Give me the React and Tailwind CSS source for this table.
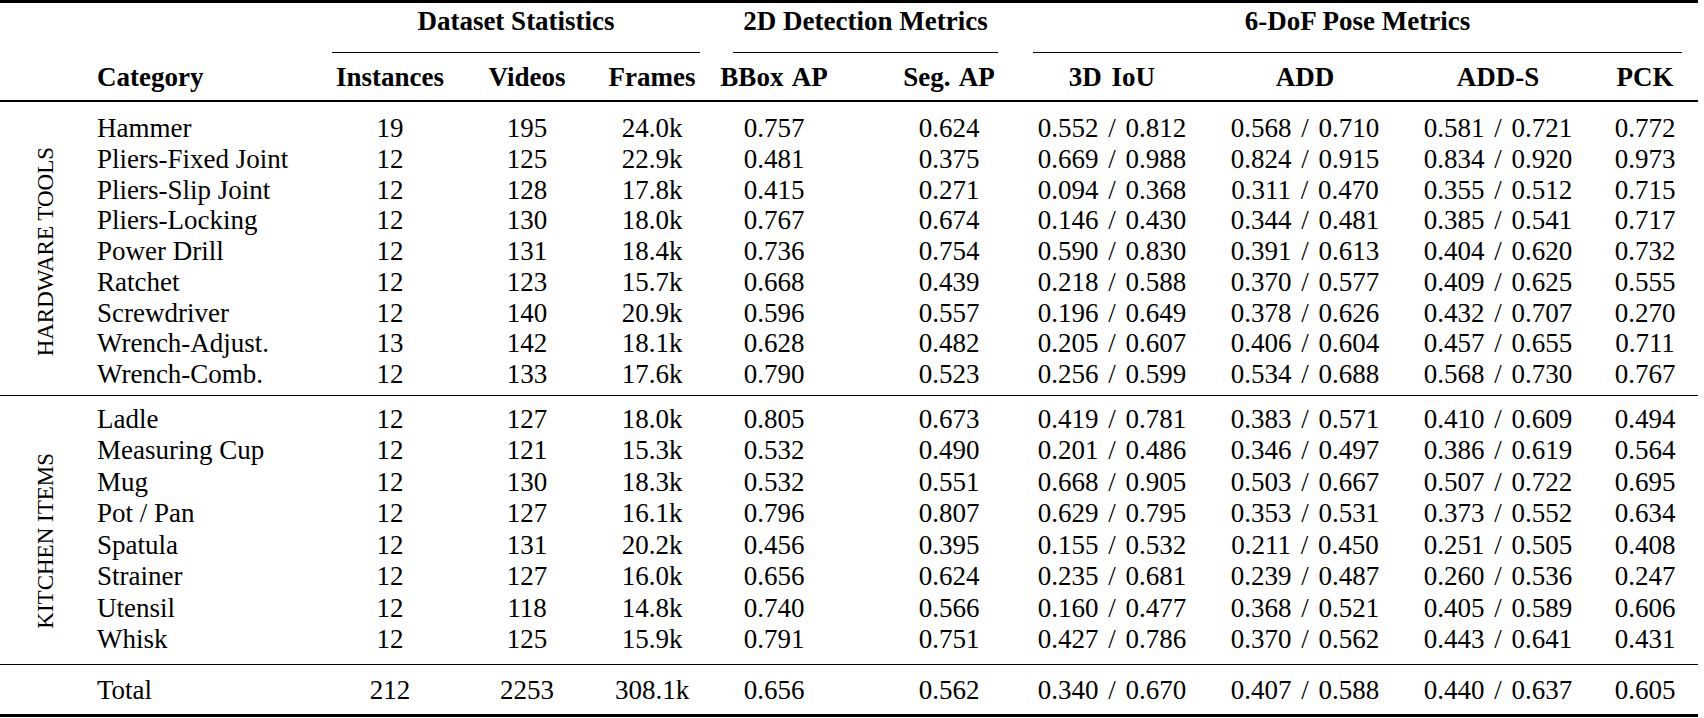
const hardware = [
  ['Hammer', '19', '195', '24.0k', '0.757', '0.624', '0.552 / 0.812', '0.568 / 0.710', '0.581 / 0.721', '0.772'],
  ['Pliers-Fixed Joint', '12', '125', '22.9k', '0.481', '0.375', '0.669 / 0.988', '0.824 / 0.915', '0.834 / 0.920', '0.973'],
  ['Pliers-Slip Joint', '12', '128', '17.8k', '0.415', '0.271', '0.094 / 0.368', '0.311 / 0.470', '0.355 / 0.512', '0.715'],
  ['Pliers-Locking', '12', '130', '18.0k', '0.767', '0.674', '0.146 / 0.430', '0.344 / 0.481', '0.385 / 0.541', '0.717'],
  ['Power Drill', '12', '131', '18.4k', '0.736', '0.754', '0.590 / 0.830', '0.391 / 0.613', '0.404 / 0.620', '0.732'],
  ['Ratchet', '12', '123', '15.7k', '0.668', '0.439', '0.218 / 0.588', '0.370 / 0.577', '0.409 / 0.625', '0.555'],
  ['Screwdriver', '12', '140', '20.9k', '0.596', '0.557', '0.196 / 0.649', '0.378 / 0.626', '0.432 / 0.707', '0.270'],
  ['Wrench-Adjust.', '13', '142', '18.1k', '0.628', '0.482', '0.205 / 0.607', '0.406 / 0.604', '0.457 / 0.655', '0.711'],
  ['Wrench-Comb.', '12', '133', '17.6k', '0.790', '0.523', '0.256 / 0.599', '0.534 / 0.688', '0.568 / 0.730', '0.767'],
];

const kitchen = [
  ['Ladle', '12', '127', '18.0k', '0.805', '0.673', '0.419 / 0.781', '0.383 / 0.571', '0.410 / 0.609', '0.494'],
  ['Measuring Cup', '12', '121', '15.3k', '0.532', '0.490', '0.201 / 0.486', '0.346 / 0.497', '0.386 / 0.619', '0.564'],
  ['Mug', '12', '130', '18.3k', '0.532', '0.551', '0.668 / 0.905', '0.503 / 0.667', '0.507 / 0.722', '0.695'],
  ['Pot / Pan', '12', '127', '16.1k', '0.796', '0.807', '0.629 / 0.795', '0.353 / 0.531', '0.373 / 0.552', '0.634'],
  ['Spatula', '12', '131', '20.2k', '0.456', '0.395', '0.155 / 0.532', '0.211 / 0.450', '0.251 / 0.505', '0.408'],
  ['Strainer', '12', '127', '16.0k', '0.656', '0.624', '0.235 / 0.681', '0.239 / 0.487', '0.260 / 0.536', '0.247'],
  ['Utensil', '12', '118', '14.8k', '0.740', '0.566', '0.160 / 0.477', '0.368 / 0.521', '0.405 / 0.589', '0.606'],
  ['Whisk', '12', '125', '15.9k', '0.791', '0.751', '0.427 / 0.786', '0.370 / 0.562', '0.443 / 0.641', '0.431'],
];

const total = ['Total', '212', '2253', '308.1k', '0.656', '0.562', '0.340 / 0.670', '0.407 / 0.588', '0.440 / 0.637', '0.605'];

const headers = ['Category', 'Instances', 'Videos', 'Frames', 'BBox AP', 'Seg. AP', '3D IoU', 'ADD', 'ADD-S', 'PCK'];

// colonner etter etikettfeltet (86px)
const cols = 'grid grid-cols-[244px_120px_154px_96px_148px_202px_124px_262px_124px_138px]';

function Row({ cells, bold, h = 'h-[31px]' }) {
  return (
    <div className={`${cols} ${h} leading-[31px] whitespace-nowrap ${bold ? 'font-bold' : ''}`}>
      {cells.map((c, i) =>
        i === 0 ? (
          <div key={i} className="pl-[11px]">{c}</div>
        ) : (
          <div key={i} className={`flex justify-center ${i === 9 ? 'pl-[32px]' : ''}`}>
            <span className="[word-spacing:3px]">{c}</span>
          </div>
        )
      )}
    </div>
  );
}

function Group({ label, rows, rowH, labelPad = '' }) {
  return (
    <div className="flex">
      <div className={`w-[86px] flex items-center justify-center pl-[5px] ${labelPad}`}>
        <span className="[writing-mode:vertical-rl] rotate-180 text-[23px] leading-none whitespace-nowrap">
          {label}
        </span>
      </div>
      <div className="flex flex-col">
        {rows.map((r) => (
          <Row key={r[0]} cells={r} h={rowH} />
        ))}
      </div>
    </div>
  );
}

function Spanner({ title, width }) {
  return (
    <div className={`flex flex-col ${width}`}>
      <div className="h-[31px] leading-[31px] text-center font-bold whitespace-nowrap">{title}</div>
      <div className="mt-[15px] h-px bg-black" />
    </div>
  );
}

export default function App() {
  return (
    <div className="w-[1704px] h-[718px] bg-white text-black text-[27px] font-['Liberation_Serif','Times_New_Roman',serif] overflow-hidden">
      <div className="w-[1698px]">
        <div className="h-[3px] bg-black" />

        {/* gruppeoverskrifter med cmidrule */}
        <div className="flex pt-[3px]">
          <div className="w-[332px]" />
          <Spanner title="Dataset Statistics" width="w-[368px]" />
          <div className="w-[33px]" />
          <Spanner title="2D Detection Metrics" width="w-[265px]" />
          <div className="w-[35px]" />
          <Spanner title="6-DoF Pose Metrics" width="w-[649px]" />
        </div>

        <div className="flex mt-[9px]">
          <div className="w-[86px]" />
          <Row cells={headers} bold />
        </div>

        <div className="mt-[7px] h-[2px] bg-black" />

        <div className="mt-[11px]">
          <Group label="HARDWARE TOOLS" rows={hardware} rowH="h-[30.75px]" />
        </div>

        <div className="mt-[5px] h-px bg-black" />

        <div className="mt-[8px]">
          <Group label="KITCHEN ITEMS" rows={kitchen} rowH="h-[31.5px]" labelPad="pt-[22px]" />
        </div>

        <div className="mt-[8px] h-px bg-black" />

        <div className="flex mt-[10px]">
          <div className="w-[86px]" />
          <Row cells={total} />
        </div>

        <div className="mt-[8px] h-[3px] bg-black" />
      </div>
    </div>
  );
}
